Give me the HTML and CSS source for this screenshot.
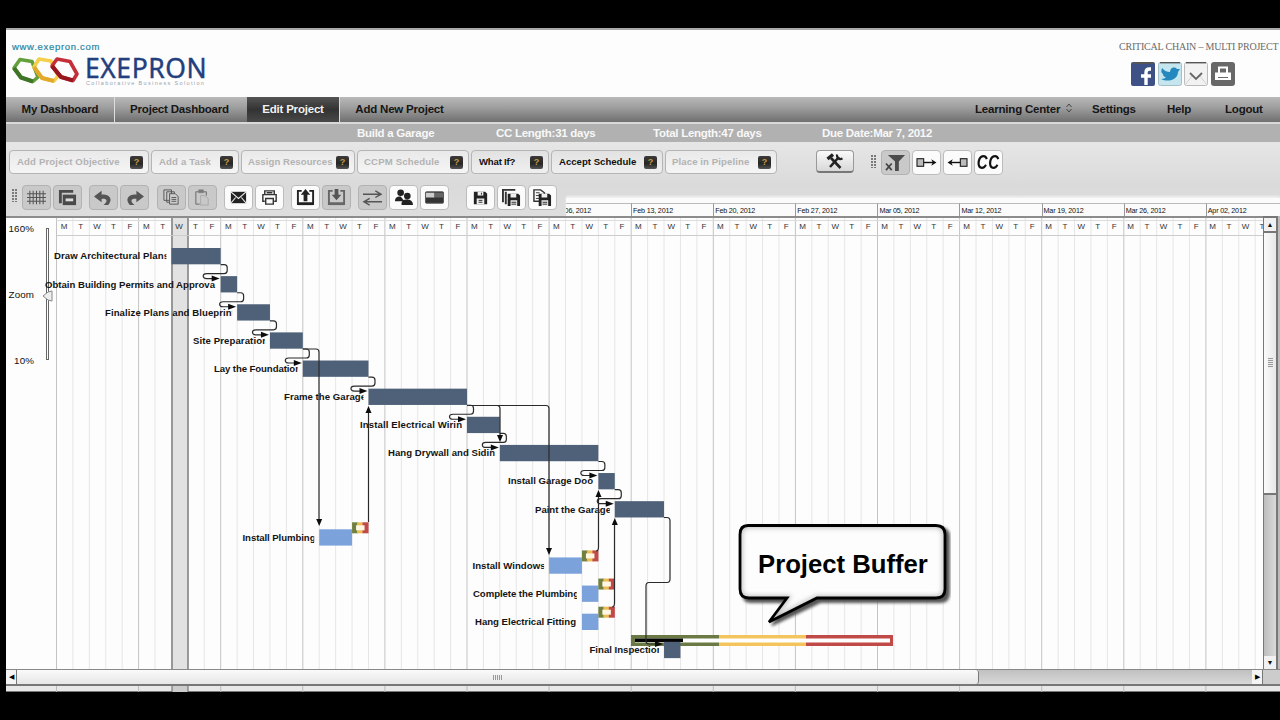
FILE: index.html
```html
<!DOCTYPE html>
<html lang="en">
<head>
<meta charset="utf-8">
<title>Exepron</title>
<link rel="stylesheet" href="styles.css">
</head>
<body>
<div class="app">
  <header class="header">
    <div class="brand">
      <div class="site">www.exepron.com</div>
      <div class="logo">
        <svg width="68" height="28" viewBox="0 0 68 28" fill="none" stroke-linejoin="round">
          <path d="M8 3.500L20 5.500L26 21L21 25.500L9 21.500L2 12Z" stroke="#63a03c" stroke-width="3.600"/>
          <path d="M2 12L9 21.500L21 25.500" stroke="#3f7426" stroke-width="4.200"/>
          <path d="M27 3L39 5L46 20L42 25L30 22L22 11Z" stroke="#f6cf4a" stroke-width="3.600"/>
          <path d="M22 11L30 22L42 25" stroke="#e3a92b" stroke-width="4"/>
          <path d="M45 3L58 5.500L65 18L61 24.500L49 21L40 10Z" stroke="#c4303a" stroke-width="3.600"/>
          <path d="M40 10L49 21L61 24.500" stroke="#99161f" stroke-width="4.200"/>
        </svg>
        <div class="wordmark"><span class="word">EXEPRON</span><span class="tagline">Collaborative Business Solution</span></div>
      </div>
    </div>
    <div class="corner">
      <div class="slogan">CRITICAL CHAIN – MULTI PROJECT</div>
      <div class="social">
        <svg width="24" height="24" viewBox="0 0 24 24"><rect width="24" height="24" rx="2" fill="#3d5187"/><path d="M2 1H22" stroke="#555" stroke-width="2"/><path d="M20 7h-1.500c-2.500 0-3.500 1-3.500 3.500v12.500M10 14h10" fill="none" stroke="#fff" stroke-width="3.400"/></svg>
        <svg width="24" height="24" viewBox="0 0 24 24"><rect x=".5" y=".5" width="23" height="23" rx="2" fill="#c5e6ee" stroke="#a5bfc6"/><path d="M2 .7H22" stroke="#555" stroke-width="1.400"/><path d="M4 6C7 9 9 10 12 10C12 6 16 4 19 7L22 7L20 10C20 17 11 21 3 17C6 17 7 16 8 15C6 15 5 14 5 12C3 11 3 9 4 6Z" fill="#2487bd"/></svg>
        <svg width="24" height="24" viewBox="0 0 24 24"><rect x=".5" y=".5" width="23" height="23" rx="2" fill="#f2f2f2" stroke="#bbb"/><path d="M2 .7H22" stroke="#555" stroke-width="1.400"/><path d="M1 23L8 14M23 23L16 14" stroke="#d2d2d2"/><path d="M6 11L12 17L18 11" fill="none" stroke="#666" stroke-width="1.800"/></svg>
        <svg width="24" height="24" viewBox="0 0 24 24"><rect width="24" height="24" rx="3" fill="#686868"/><path d="M8 11V5.500H16V11" fill="none" stroke="#fff" stroke-width="2"/><path d="M4 10.500H20V18H17V15H7V18H4Z" fill="#fff"/><path d="M7 17H17" stroke="#fff" stroke-width="2"/></svg>
      </div>
    </div>
  </header>

  <nav class="nav">
    <a class="tab t1">My Dashboard</a><a class="tab t2">Project Dashboard</a><a class="tab t3 active">Edit Project</a><a class="tab t4">Add New Project</a>
    <div class="links">
      <a class="l1">Learning Center<svg width="8" height="10" viewBox="0 0 8 10"><path d="M1.500 4L4 1L6.500 4M1.500 6L4 9L6.500 6" fill="none" stroke="#444"/></svg></a><a class="l2">Settings</a><a class="l3">Help</a><a class="l4">Logout</a>
    </div>
  </nav>

  <div class="status"><span class="s1">Build a Garage</span><span class="s2">CC Length:31 days</span><span class="s3">Total Length:47 days</span><span class="s4">Due Date:Mar 7, 2012</span></div>

  <section class="tools">
    <div class="steps">
      <div class="step w1"><span>Add Project Objective</span><i>?</i></div>
      <div class="step w2"><span>Add a Task</span><i>?</i></div>
      <div class="step w3"><span>Assign Resources</span><i>?</i></div>
      <div class="step w4"><span>CCPM Schedule</span><i>?</i></div>
      <div class="step w5 on"><span>What If?</span><i>?</i></div>
      <div class="step w6 on"><span>Accept Schedule</span><i>?</i></div>
      <div class="step w7"><span>Place in Pipeline</span><i>?</i></div>
      <div class="wrench"><svg width="18" height="17" viewBox="0 0 18 17" fill="none" stroke="#222"><path d="M4 14L13 4" stroke-width="2.600"/><path d="M11 1.500C10.500 5 13 7 16.500 5.500" stroke-width="2.200"/><path d="M5 5L14.500 15" stroke-width="2.600"/><path d="M1.500 6L7 1.500" stroke-width="3.400"/></svg></div>
      <div class="grip"></div>
      <div class="views">
        <div class="btn off"><svg viewBox="0 0 24 20"><path d="M4 2H22L15.500 9V19H11.500V9Z" fill="#4c4c4c"/><path d="M2 11L8 18M8 11L2 18" stroke="#444" stroke-width="1.800"/></svg></div>
        <div class="btn"><svg viewBox="0 0 24 20"><rect x="2" y="6" width="7" height="8" fill="#bbb" stroke="#222" stroke-width="1.200"/><path d="M9 10H20" stroke="#111" stroke-width="1.500"/><path d="M17 6.500L22.500 10L17 13.500L18.500 10Z" fill="#111"/></svg></div>
        <div class="btn"><svg viewBox="0 0 24 20"><rect x="15" y="6" width="7" height="8" fill="#bbb" stroke="#222" stroke-width="1.200"/><path d="M15 10H4" stroke="#111" stroke-width="1.500"/><path d="M7 6.500L1.500 10L7 13.500L5.500 10Z" fill="#111"/></svg></div>
        <div class="btn cc"><span>CC</span></div>
      </div>
    </div>
    <div class="lower">
      <div class="icons">
        <div class="grip"></div>
        <div class="btn off g1"><svg viewBox="0 0 24 20"><path d="M2 6H22M2 10H22M2 14H22M5 3V17M8.500 3V17M12 3V17M15.500 3V17M19 3V17" stroke="#555" stroke-width="1.100"/></svg></div>
        <div class="btn off"><svg viewBox="0 0 24 20"><path d="M3 2H18V5H6V16H3Z" fill="#4a4a4a"/><rect x="7" y="7" width="14" height="11" fill="#4a4a4a"/><rect x="10" y="11" width="8" height="3" fill="#ddd"/></svg></div>
        <div class="btn off gap7"><svg viewBox="0 0 24 20"><path d="M10 3V7C17 6 23 11 17 18H12C17 14 16 11 10 11.500V15L2 9Z" fill="#555"/></svg></div>
        <div class="btn off"><svg viewBox="0 0 24 20"><path d="M14 3V7C7 6 1 11 7 18H12C7 14 8 11 14 11.500V15L22 9Z" fill="#555"/></svg></div>
        <div class="btn off gap8"><svg viewBox="0 0 24 20" fill="#ccc" stroke="#555"><path d="M4 2H12V13H4ZM7 4H15V15H7Z"/><path d="M10 6H16L19 9V17H10ZM12 10H17M12 12H17M12 14H17"/></svg></div>
        <div class="btn off"><svg viewBox="0 0 24 20" fill="none" stroke="#888"><path d="M9 17H5V4H16V8" stroke="#666"/><path d="M8 2H13V5H8Z" fill="#777"/><path d="M10 8H14L18 11V18H10Z" fill="#c8c8c8" stroke="#aaa"/></svg></div>
        <div class="btn gap7"><svg viewBox="0 0 24 20"><rect x="4" y="4" width="16" height="12" fill="#222"/><path d="M4 4L12 11L20 4M4 16L9 10M20 16L15 10" fill="none" stroke="#eee" stroke-width="1.100"/></svg></div>
        <div class="btn"><svg viewBox="0 0 24 20" fill="none" stroke="#333" stroke-width="1.500"><path d="M7 7V3H17V7M7 14H5V7H19V14H17M8 11H16V17H8ZM9 5H15"/></svg></div>
        <div class="btn gap7"><svg viewBox="0 0 24 20"><path d="M8 3H4V17H20V3H16" fill="none" stroke="#222" stroke-width="2"/><path d="M4 15H20V18H4Z" fill="#222"/><path d="M12 1L17 7H14V14H10V7H7Z" fill="#222"/></svg></div>
        <div class="btn off"><svg viewBox="0 0 24 20"><path d="M8 3H4V17H20V3H16" fill="none" stroke="#666" stroke-width="2"/><path d="M4 15H20V18H4Z" fill="#666"/><path d="M12 13L17 7H14V1H10V7H7Z" fill="#555"/></svg></div>
        <div class="btn off gap7"><svg viewBox="0 0 24 20" fill="none" stroke="#555" stroke-width="1.500"><path d="M2 6.500H20M15 3L21 6.500L15 10M22 14.500H4M9 11L3 14.500L9 18"/></svg></div>
        <div class="btn"><svg viewBox="0 0 24 20" fill="#222"><circle cx="9" cy="5" r="3.500"/><path d="M3 14C3 9 7 9 9 9L13 14Z"/><circle cx="16" cy="8.500" r="3.500"/><path d="M10 18C9 12 14 12 16 12C18 12 22 13 22 18Z"/></svg></div>
        <div class="btn"><svg viewBox="0 0 24 20"><rect x="2.500" y="4" width="19" height="12" rx="1" fill="#333" stroke="#555"/><path d="M3 5H12V10H3Z" fill="#ccc"/><path d="M12 5H21V10H12Z" fill="#666"/></svg></div>
        <div class="btn gap17"><svg viewBox="0 0 24 20"><path d="M5 4H17L19 6V17H5Z" fill="#222"/><path d="M9 4H15V8H9ZM8 11H16V17H8Z" fill="#eee"/><path d="M10 13H14M10 15H14M13 5V7" stroke="#222"/></svg></div>
        <div class="btn"><svg viewBox="0 0 24 20"><path d="M3 15V2H16M6 17V4" fill="none" stroke="#333" stroke-width="2"/><path d="M8 6H19L21 8V19H8Z" fill="#222"/><path d="M11 6H17V10H11ZM11 13H18V19H11Z" fill="#eee"/><path d="M12 15H17M12 17H17" stroke="#222"/></svg></div>
        <div class="btn"><svg viewBox="0 0 24 20"><path d="M3 2H10L14 5V14H3Z" fill="#fff" stroke="#333" stroke-width="1.500"/><path d="M5 5H9M5 8H9M5 11H9" stroke="#333"/><path d="M8 6H19L21 8V19H8Z" fill="#222"/><path d="M11 6H17V10H11ZM11 13H18V19H11Z" fill="#eee"/><path d="M12 15H17M12 17H17" stroke="#222"/></svg></div>
      </div>
      <div class="weeks"><div class="weekstrip">
        <span>Feb 06, 2012</span><span>Feb 13, 2012</span><span>Feb 20, 2012</span><span>Feb 27, 2012</span><span>Mar 05, 2012</span><span>Mar 12, 2012</span><span>Mar 19, 2012</span><span>Mar 26, 2012</span><span>Apr 02, 2012</span>
      </div></div>
    </div>
  </section>

  <main class="board">
    <div class="gantt">
      <svg class="chart" id="chart" width="1257" height="453" viewBox="6 216 1257 453"></svg>
      <div class="zoomer"><span>160%</span><span>Zoom</span><span>10%</span></div>
      <div class="days" id="days"></div>
      <div class="callout">
        <svg width="216" height="110" viewBox="735 520 216 110">
          <defs>
            <filter id="soft" x="-10%" y="-10%" width="120%" height="130%"><feGaussianBlur stdDeviation="1.500"/></filter>
            <filter id="inner" x="-5%" y="-5%" width="110%" height="110%"><feGaussianBlur stdDeviation="2.500"/></filter>
            <clipPath id="shape"><path d="M748 525.500H936Q945 525.500 945 534.500V589Q945 598 936 598H817L769 622L787 598H749Q740 598 740 589V534.500Q740 525.500 748 525.500Z"/></clipPath>
          </defs>
          <path d="M748 525H937Q946 525 946 534V590Q946 599 937 599H817L769 622L787 599H748Q740 599 740 590V534Q740 525 748 525Z" transform="translate(3 3)" fill="#555" stroke="#555" stroke-width="2" filter="url(#soft)"/>
          <path d="M748 525.500H936Q945 525.500 945 534.500V589Q945 598 936 598H817L769 622L787 598H749Q740 598 740 589V534.500Q740 525.500 748 525.500Z" fill="#fdfdfd"/>
          <g clip-path="url(#shape)"><path d="M748 525.500H936Q945 525.500 945 534.500V589Q945 598 936 598H817L769 622L787 598H749Q740 598 740 589V534.500Q740 525.500 748 525.500Z" fill="none" stroke="#bbb" stroke-width="5" filter="url(#inner)"/></g>
          <path d="M748 525.500H936Q945 525.500 945 534.500V589Q945 598 936 598H817L769 622L787 598H749Q740 598 740 589V534.500Q740 525.500 748 525.500Z" fill="none" stroke="#000" stroke-width="2.800"/>
        </svg>
        <span>Project Buffer</span>
      </div>
    </div>
    <div class="vscroll">
      <div class="arrow">▲</div><div class="vthumb"><b></b></div><div class="vtrack"></div><div class="arrow">▼</div>
    </div>
  </main>
  <div class="hscroll"><div class="harrow">◀</div><div class="hthumb"><b></b></div><div class="htrack"></div><div class="harrow">▶</div></div>
  <div class="sliver"><svg width="1274" height="6" viewBox="6 686 1274 6" id="under"></svg></div>
</div>
<script src="app.js"></script>
</body>
</html>
```
FILE: styles.css
```css
* { box-sizing: border-box; }
body { margin: 0; background: #000; font-family: "Liberation Sans", Arial, sans-serif; overflow: hidden; }
.app { width: 1274px; height: 664px; margin: 28px 0 28px 6px; background: #fdfdfd; overflow: hidden; display: flex; flex-direction: column; }
.header { height: 69px; border-top: 2px solid #a9a9a9; display: flex; justify-content: space-between; flex: none; }
.brand { padding: 11px 0 0 6px; }
.site { font-size: 9.500px; line-height: 12px; color: #2a86a6; letter-spacing: .7px; white-space: nowrap; -webkit-text-stroke: .2px #2a86a6; }
.logo { display: flex; gap: 5px; margin-top: 3px; }
.wordmark { display: flex; flex-direction: column; }
.word { font: 26.500px/25px "Noto Sans", sans-serif; color: #233f7d; letter-spacing: .55px; -webkit-text-stroke: .4px #233f7d; height: 25px; }
.tagline { font-size: 5.500px; line-height: 5px; letter-spacing: 1.350px; padding-left: 1px; color: #98a3b1; white-space: nowrap; }
.corner { display: flex; flex-direction: column; width: 161px; padding-top: 11px; }
.slogan { font: 10px/12px "Liberation Serif", serif; letter-spacing: -.2px; color: #6b6b6b; white-space: nowrap; }
.social { display: flex; gap: 2.500px; padding: 9px 0 0 12px; }
.nav { height: 25px; flex: none; display: flex; background: linear-gradient(#b9b9b9, #9c9c9c 45%, #6f6f6f); font: bold 11.500px/25px "Liberation Sans", sans-serif; letter-spacing: -.2px; color: #161616; white-space: nowrap; }
.tab { text-align: center; border-right: 1px solid #ddd; }
.t1 { width: 109px; } .t2 { width: 132px; border-right: 0; padding-right: 3px; } .t3 { width: 93px; } .t4 { width: 119px; border: 0; }
.active { background: linear-gradient(#555, #333 50%, #484848); color: #f2f2f2; }
.links { margin-left: auto; display: flex; width: 305px; }
.l1 { width: 117px; } .l1 svg { margin-left: 5px; } .l2 { width: 75px; } .l3 { width: 58px; }
.status { height: 20px; flex: none; border-top: 2px solid #d9d9d9; background: #b1b1b1; display: flex; padding-left: 351px; font: bold 11.500px/18px "Liberation Sans", sans-serif; letter-spacing: -.28px; color: #f8f8f8; white-space: nowrap; }
.s1 { width: 139px; } .s2 { width: 157px; } .s3 { width: 169px; }
.tools { height: 74px; flex: none; background: linear-gradient(#e6e6e6, #dadada 60%, #dedede); display: flex; flex-direction: column; }
.steps { display: flex; height: 39px; padding: 8px 0 0 3px; align-items: flex-start; }
.step { height: 24px; margin-right: 2px; border: 1px solid #b5b5b5; border-radius: 4px; background: linear-gradient(#e9e9e9, #f5f5f5); display: flex; justify-content: space-between; align-items: center; padding: 0 5px 0 7px; font: bold 9.600px/22px "Liberation Sans", sans-serif; letter-spacing: .15px; color: #b3b3b3; white-space: nowrap; }
.on { color: #111; background: linear-gradient(#e2e2e2, #efefef); letter-spacing: 0; }
.w1 { width: 140px; } .w2 { width: 88px; } .w3 { width: 114px; padding-left: 6px; letter-spacing: .05px; } .w4 { width: 112px; padding-left: 6px; } .w5 { width: 78px; letter-spacing: -.2px; } .w6 { width: 112px; } .w7 { width: 112px; padding-left: 6px; letter-spacing: .1px; }
.step i { flex: none; width: 13px; height: 13px; border-radius: 2px; background: linear-gradient(#3d3a37, #262626 60%, #555); color: #c29b45; font: bold 9px/13px "Liberation Sans", sans-serif; text-align: center; letter-spacing: 0; }
.wrench { width: 38px; height: 23px; margin-left: 37px; border: 1px solid #999; border-bottom: 2px solid #777; border-radius: 4px; background: linear-gradient(#fafafa, #d8d8d8); display: flex; align-items: center; justify-content: center; }
.grip { width: 5px; height: 13px; background: radial-gradient(circle at 1px 1px, #777 .7px, transparent 1px) 0 0 / 3px 3px; }
.steps .grip { margin: 5px 5px 0 17px; }
.views { display: flex; gap: 2px; }
.btn { width: 29px; height: 25px; border: 1px solid #bcbcbc; border-radius: 4px; background: #fbfbfb; display: flex; align-items: center; justify-content: center; flex: none; }
.btn svg { width: 23px; height: 19px; }
.off { background: #c9c9c9; border-color: #b2b2b2; }
.cc { font: italic bold 20px/23px "Liberation Sans", sans-serif; color: #111; letter-spacing: .8px; }
.cc span { transform: scaleX(.75); }
.lower { height: 35px; display: flex; align-items: flex-end; }
.icons { width: 560px; height: 35px; display: flex; gap: 2px; padding: 4px 0 0 6px; flex: none; }
.icons .grip { margin-top: 4px; }
.g1 { margin-left: 3px; }
.gap7 { margin-left: 5px; } .gap8 { margin-left: 6px; } .gap17 { margin-left: 15px; }
.weeks { flex: 1; height: 18px; overflow: hidden; background: #fbfbfb; box-shadow: 0 -2px 2px #efefef; }
.weekstrip { display: flex; margin-left: -17px; height: 18px; padding-top: 5px; }
.weekstrip span { flex: none; width: 82.100px; border-left: 1px solid #999; border-top: 1px solid #bbb; padding-left: 1px; font-size: 7.200px; letter-spacing: -.2px; line-height: 14px; color: #111; white-space: nowrap; }
.board { height: 453px; flex: none; display: flex; }
.gantt { width: 1257px; height: 453px; position: relative; overflow: hidden; border-top: 2px solid #8c8c8c; }
.chart { position: absolute; left: 0; top: -2px; }
.days { position: relative; display: flex; margin-left: 50.500px; width: 1206px; height: 18px; overflow: hidden; border-bottom: 1px solid #ccc; }
.days span { flex: none; width: 16.420px; text-align: center; font-size: 8px; line-height: 17px; color: #333; padding-right: 1px; }
.zoomer { position: absolute; left: 0; top: 5px; width: 28px; display: flex; flex-direction: column; gap: 54px; text-align: right; align-items: flex-end; font-size: 9.800px; line-height: 12px; letter-spacing: .1px; color: #111; }
.task { font: bold 9.600px "Liberation Sans", sans-serif; fill: #141414; }
.callout { position: absolute; left: 729px; top: 302px; width: 216px; height: 110px; }
.callout span { position: absolute; left: 23px; top: 28px; font: bold 25.700px/32px "Liberation Sans", sans-serif; color: #000; white-space: nowrap; }
.vscroll { width: 17px; padding: 2px 2px 0 0; background: #777; display: flex; flex-direction: column; border-left: 1px solid #777; border-right: 2px solid #bbb; }
.arrow { height: 13px; background: #f1f1f1; font-size: 7px; line-height: 13px; text-align: center; color: #111; }
.vthumb { height: 262px; margin-top: 2px; background: linear-gradient(90deg, #fafafa, #e8e8e8); border-bottom: 2px solid #777; display: flex; align-items: center; justify-content: center; }
.vthumb b { width: 5px; height: 10px; background: repeating-linear-gradient(#999 0 1px, #eee 1px 2px); }
.vtrack { flex: 1; background: linear-gradient(90deg, #bdbdbd, #dadada); }
.hscroll { height: 17px; flex: none; display: flex; border-top: 1px solid #888; border-bottom: 2px solid #777; background: #ccc; padding-right: 17px; }
.harrow { width: 11px; background: #f4f4f4; border-right: 1px solid #777; font-size: 7px; line-height: 14px; text-align: center; }
.hthumb { width: 962px; background: linear-gradient(#fafafa, #e6e6e6); border-right: 1px solid #777; border-radius: 0 3px 3px 0; display: flex; align-items: center; justify-content: center; }
.hthumb b { width: 9px; height: 5px; background: repeating-linear-gradient(90deg, #999 0 1px, #eee 1px 2px); }
.htrack { flex: 1; background: linear-gradient(#c0c0c0, #d8d8d8); }
.sliver { height: 6px; flex: none; background: #e8e8e8; border-bottom: 1px solid #777; }
.sliver svg { display: block; }
```
FILE: app.js
```js
const DAY = 16.42, LEFT = 56.5, TOP = 248, ROW = 28.13;
const x = d => LEFT + d * DAY;
const y = r => TOP + r * ROW;

// name, start day, end day, label left, label full width, kind
const tasks = [
  ["Draw Architectural Plans", 7, 10, 54, 115],
  ["Obtain Building Permits and Approva", 10, 11, 45, 170],
  ["Finalize Plans and Blueprint", 11, 13, 105, 130],
  ["Site Preparation", 13, 15, 193, 75],
  ["Lay the Foundation", 15, 19, 214, 87],
  ["Frame the Garage", 19, 25, 284, 82],
  ["Install Electrical Wirin", 25, 27, 360, 102],
  ["Hang Drywall and Sidin", 27, 33, 388, 107],
  ["Install Garage Doo", 33, 34, 508, 85],
  ["Paint the Garage", 34, 37, 535, 76],
  ["Install Plumbing", 16, 18, 242.5, 73, 1],
  ["Install Windows", 30, 32, 472.5, 73, 1],
  ["Complete the Plumbing", 32, 33, 473, 106, 1],
  ["Hang Electrical Fitting", 32, 33, 475, 101, 1],
  ["Final Inspection", 37, 38, 589.5, 73]
];

let out = "";
for (let d = 0; d < 74; d++) {
  out += `<path d="M${x(d)} 217V669" stroke="${d % 5 ? "#e6e6e6" : "#c4c4c4"}"/>`;
}
out += `<path d="M${x(0)} 220.500H1263" stroke="#ddd"/>`;
out += `<rect x="172" y="214" width="16" height="460" fill="#e2e2e2" stroke="#777" stroke-width="1.4"/>`;
out += `<rect x="46.5" y="228.500" width="2" height="131" fill="#fff" stroke="#666"/><path d="M43 296L48 292L52 291V301L48 300Z" fill="#eee" stroke="#888"/>`;

// Project buffer
out += `<rect x="631" y="635" width="88" height="11" fill="#6b7a45"/><rect x="719" y="635" width="87" height="11" fill="#f4c45f"/><rect x="806" y="635" width="87" height="11" fill="#c04a47"/><rect x="635" y="638.500" width="255" height="4" fill="#fff"/><rect x="635" y="638.500" width="48" height="3.500" fill="#050505"/>`;

tasks.forEach(([name, a, b, lx, lw, feeding], r) => {
  out += `<rect x="${x(a)}" y="${y(r)}" width="${(b - a) * DAY}" height="16.3" fill="${feeding ? "#7ba2da" : "#4e6179"}"/>`;
  out += `<svg x="${lx - 1}" y="${y(r)}" width="${x(a) - 4 - lx}" height="16"><text class="task" x="1" y="11.4" textLength="${lw}">${name}</text></svg>`;
});

// Feeding buffers
[[18, 10], [32, 11], [33, 12], [33, 13]].forEach(([d, r]) => {
  const bx = x(d), by = y(r) - 7;
  out += `<rect x="${bx}" y="${by}" width="6" height="11" fill="#71803f"/><rect x="${bx + 5}" y="${by}" width="6" height="11" fill="#edbd55"/><rect x="${bx + 10.5}" y="${by}" width="6" height="11" fill="#c04a47"/><rect x="${bx + 4}" y="${by + 3}" width="8.500" height="5" fill="#fff6e4"/>`;
});

const line = d => { out += `<path d="${d}" fill="none" stroke="#2a2a2a" stroke-width="1.200"/>`; };
const tip = (px, py, dir) => {
  const shape = { r: "l-8 -3v6z", d: "l-3 -7h6z", u: "l-3 7h6z" }[dir];
  out += `<path d="M${px} ${py}${shape}" fill="#0c0c0c"/>`;
};
for (let r = 0; r < 9; r++) {
  const s = x(tasks[r][2]), b = y(r) + 16.6;
  line(`M${s} ${b}h3.500q3 0 3 3v3q0 3 -3 3H${s - 14}q-3.500 0 -3.500 2.500t3.500 2.500H${s - 6}`);
  tip(s - 1, b + 14, "r");
}
line("M303 349H316Q319 349 319 352V522"); tip(319.2, 526, "d");
line("M368.500 522V410"); tip(368.5, 406, "u");
line("M467 405.500H546Q549 405.500 549 408.500V549"); tip(549, 555, "d");
line("M497 405.500Q500 405.500 500 409V437"); tip(500, 442, "d");
line("M596 551Q598.500 551 598.500 547V494"); tip(598.5, 490, "u");
line("M612 607Q614.500 607 614.500 603V522"); tip(614.8, 518, "u");
line("M664 517.500H667Q670 517.500 670 521V579Q670 582.500 667 582.500H649Q646 582.500 646 586V641Q646 644 649 644H658"); tip(663, 644, "r");
document.getElementById("chart").innerHTML = out;

document.getElementById("days").innerHTML = Array.from({ length: 74 }, (_, d) => `<span>${"MTWTF"[d % 5]}</span>`).join("");

let under = `<rect x="172" y="685" width="16" height="8" fill="#ccc" stroke="#666"/>`;
for (let d = 0; d < 74; d += 5) under += `<path d="M${x(d)} 685V692" stroke="#bbb"/>`;
document.getElementById("under").innerHTML = under;
```
